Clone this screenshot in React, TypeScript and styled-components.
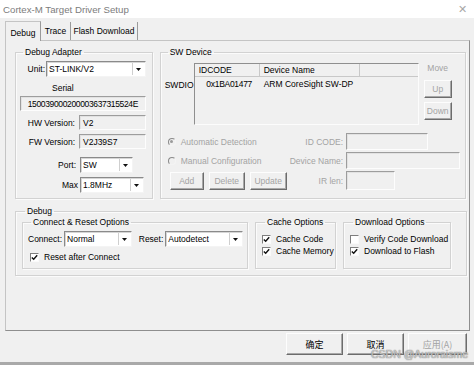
import styled, { createGlobalStyle } from "styled-components";

const GlobalStyle = createGlobalStyle`
  * { box-sizing: border-box; }
  html, body { margin: 0; padding: 0; background: #f0f0f0; }
  body {
    font-family: "Liberation Sans", Arial, sans-serif;
    font-size: 8.5px;
    color: #000;
  }
`;

const Window = styled.div`
  position: relative;
  width: 474px;
  height: 365px;
  overflow: hidden;
  display: flex;
  flex-direction: column;
  background: #f0f0f0;
  border-bottom: 3px solid #a9a9a9;
`;

const TitleBar = styled.div`
  height: 18px;
  flex: none;
  background: #fff;
  display: flex;
  align-items: center;
  justify-content: space-between;
  padding: 0 7px 0 3px;
`;

const Title = styled.span`
  font-size: 9.7px;
  color: #7c7c7c;
`;

const Close = styled.span`
  font-size: 11px;
  color: #a8a8a8;
`;

const Body = styled.div`
  flex: 1;
  padding: 2px 4px 0 5px;
  display: flex;
  flex-direction: column;
`;

const TabStrip = styled.div`
  height: 20px;
  display: flex;
  align-items: flex-end;
`;

const Tab = styled.div<{ $w: number; $active?: boolean }>`
  width: ${(p) => p.$w}px;
  height: ${(p) => (p.$active ? 20 : 18)}px;
  display: flex;
  align-items: center;
  justify-content: center;
  border-right: 1px solid #9a9a9a;
  border-left: ${(p) => (p.$active ? "1px solid #c4c4c4" : "none")};
  border-top: ${(p) => (p.$active ? "1px solid #c4c4c4" : "none")};
  padding-top: ${(p) => (p.$active ? 2 : 0)}px;
  margin-bottom: ${(p) => (p.$active ? -1 : 0)}px;
  background: #f0f0f0;
  position: relative;
  z-index: 1;
`;

const Panel = styled.div`
  height: 291px;
  border: 1px solid;
  border-color: #c4c4c4 #8e8e8e #8e8e8e #c4c4c4;
  padding: 6px 3px 0 9px;
  display: flex;
  flex-direction: column;
`;

const TopRow = styled.div`
  display: flex;
  gap: 7px;
`;

const Group = styled.fieldset<{ $w: number; $h: number; $pad: string; $mt?: number }>`
  margin: ${(p) => p.$mt ?? 0}px 0 0 0;
  min-inline-size: 0;
  width: ${(p) => p.$w}px;
  height: ${(p) => p.$h}px;
  padding: ${(p) => p.$pad};
  border: 1px solid #d2d2d2;
  box-shadow: inset 1px 1px #fbfbfb, 1px 1px #fbfbfb;
  overflow: hidden;
`;

const Legend = styled.legend`
  padding: 0 2px;
  margin-left: 3px;
  line-height: 11px;
  font-size: 8.5px;
`;

const FieldRow = styled.div<{ $cols: string; $gap: number; $mt: number; $h: number }>`
  display: grid;
  grid-template-columns: ${(p) => p.$cols};
  column-gap: ${(p) => p.$gap}px;
  align-items: center;
  height: ${(p) => p.$h}px;
  margin-top: ${(p) => p.$mt}px;
`;

const Label = styled.span<{ $disabled?: boolean }>`
  text-align: right;
  white-space: nowrap;
  color: ${(p) => (p.$disabled ? "#a3a3a3" : "#000")};
`;

const SerialLabel = styled.div`
  margin-top: 6px;
  height: 11px;
  line-height: 11px;
  padding-left: 32px;
`;

const Field = styled.div<{ $w?: number; $center?: boolean }>`
  height: 100%;
  width: ${(p) => (p.$w ? `${p.$w}px` : "100%")};
  background: #f0f0f0;
  border: 1px solid;
  border-color: #9d9d9d #fdfdfd #fdfdfd #9d9d9d;
  box-shadow: inset 1px 1px #e2e2e2;
  display: flex;
  align-items: center;
  justify-content: ${(p) => (p.$center ? "center" : "flex-start")};
  padding: 0 3px;
  white-space: nowrap;
`;

const SerialField = styled(Field)`
  height: 15px;
  margin-top: 2px;
  letter-spacing: -0.35px;
`;

const SelectBox = styled.div<{ $w: number }>`
  width: ${(p) => p.$w}px;
  height: 100%;
  background: #fff;
  border: 1px solid;
  border-color: #8a8a8a #f4f4f4 #f4f4f4 #8a8a8a;
  box-shadow: inset 1px 1px #d6d6d6;
  display: flex;
  align-items: stretch;
`;

const SelectText = styled.span`
  flex: 1;
  display: flex;
  align-items: center;
  padding-left: 2px;
  white-space: nowrap;
`;

const DropBtn = styled.span`
  width: 12px;
  margin: 1px;
  display: flex;
  align-items: center;
  justify-content: center;
  background: #fff;
  border-left: 1px solid #cfcfcf;
`;

function Select({ value, w }: { value: string; w: number }) {
  return (
    <SelectBox $w={w}>
      <SelectText>{value}</SelectText>
      <DropBtn>
        <svg width="5" height="3" viewBox="0 0 5 3">
          <path d="M0 0h5L2.5 3z" fill="#111" />
        </svg>
      </DropBtn>
    </SelectBox>
  );
}

const DeviceTop = styled.div`
  display: flex;
  height: 62px;
`;

const SwdioLabel = styled.span`
  width: 29px;
  padding-top: 17px;
`;

const Table = styled.div`
  width: 225px;
  height: 62px;
  border: 1px solid;
  border-color: #8f8f8f #fcfcfc #fcfcfc #8f8f8f;
  background: #f0f0f0;
  display: flex;
  flex-direction: column;
`;

const TableRow = styled.div<{ $head?: boolean }>`
  display: grid;
  grid-template-columns: 65px 100px 1fr;
  height: ${(p) => (p.$head ? 13 : 14)}px;
  border-bottom: ${(p) => (p.$head ? "1px solid #c8c8c8" : "none")};
`;

const Cell = styled.span<{ $head?: boolean; $center?: boolean }>`
  display: flex;
  align-items: center;
  justify-content: ${(p) => (p.$center ? "center" : "flex-start")};
  padding-left: 4px;
  border-right: ${(p) => (p.$head ? "1px solid #c8c8c8" : "none")};
  white-space: nowrap;
  overflow: hidden;
  letter-spacing: ${(p) => (p.$center ? "-0.3px" : "0")};
`;

const MoveCol = styled.div`
  width: 28px;
  margin-left: 5px;
  display: flex;
  flex-direction: column;
  align-items: center;
`;

const MoveLabel = styled.span`
  height: 10px;
  line-height: 10px;
  color: #a3a3a3;
`;

const Button = styled.div<{ $w: number; $h: number; $disabled?: boolean; $cjk?: boolean }>`
  width: ${(p) => p.$w}px;
  height: ${(p) => p.$h}px;
  flex: none;
  display: flex;
  align-items: center;
  justify-content: center;
  background: #f0f0f0;
  border: 1px solid;
  border-color: #fdfdfd #6c6c6c #6c6c6c #fdfdfd;
  box-shadow: inset -1px -1px #a8a8a8;
  color: ${(p) => (p.$disabled ? "#a3a3a3" : "#000")};
  font-family: ${(p) =>
    p.$cjk
      ? '"Noto Sans CJK SC", "Liberation Sans", sans-serif'
      : '"Liberation Sans", Arial, sans-serif'};
  font-size: ${(p) => (p.$cjk ? 9 : 8.5)}px;
`;

const MoveBtn = styled(Button)<{ $mt: number }>`
  margin-top: ${(p) => p.$mt}px;
`;

const ConfigGrid = styled.div`
  display: grid;
  grid-template-columns: 1fr auto 114px;
  grid-template-rows: 17px 17px 19px;
  column-gap: 3px;
  row-gap: 2px;
  margin-top: 8px;
  margin-right: 2px;
  align-items: center;
`;

const RadioRow = styled.div`
  display: flex;
  align-items: center;
  gap: 5px;
  padding-left: 3px;
  color: #a3a3a3;
`;

const RadioDot = styled.span<{ $on?: boolean }>`
  width: 8px;
  height: 8px;
  border-radius: 50%;
  border: 1px solid;
  border-color: #8a8a8a #f4f4f4 #f4f4f4 #8a8a8a;
  background: #f0f0f0;
  display: flex;
  align-items: center;
  justify-content: center;
  &::after {
    content: "";
    width: 3px;
    height: 3px;
    border-radius: 50%;
    background: ${(p) => (p.$on ? "#9a9a9a" : "transparent")};
  }
`;

const ButtonRow = styled.div`
  display: flex;
  align-items: center;
  gap: 5px;
  padding-left: 5px;
  height: 100%;
`;

const DebugGroupRow = styled.div`
  display: flex;
  gap: 7px;
`;

const CheckRow = styled.div<{ $mt: number }>`
  display: flex;
  align-items: center;
  gap: 5px;
  height: 12px;
  margin-top: ${(p) => p.$mt}px;
  white-space: nowrap;
`;

const CheckBox = styled.span`
  width: 9px;
  height: 9px;
  flex: none;
  border: 1px solid;
  border-color: #7e7e7e #fafafa #fafafa #7e7e7e;
  background: #fff;
  display: flex;
  align-items: center;
  justify-content: center;
`;

function Check({ on, label, mt }: { on: boolean; label: string; mt: number }) {
  return (
    <CheckRow $mt={mt}>
      <CheckBox>
        {on && (
          <svg width="7" height="7" viewBox="0 0 7 7">
            <path d="M0.8 3.4 L2.7 5.3 L6.2 1.2" stroke="#111" strokeWidth="1.4" fill="none" />
          </svg>
        )}
      </CheckBox>
      <span>{label}</span>
    </CheckRow>
  );
}

const ConnectRow = styled.div`
  display: flex;
  align-items: center;
  height: 16px;
  margin-top: 3px;
`;

const InlineLabel = styled.span<{ $ml?: number }>`
  margin: 0 2px 0 ${(p) => p.$ml ?? 0}px;
`;

const ResetCheck = styled.div`
  padding-left: 2px;
`;

const Footer = styled.div`
  display: flex;
  justify-content: flex-end;
  gap: 4px;
  margin-top: 2px;
  padding-right: 3px;
`;

const Watermark = styled.span`
  position: absolute;
  right: 6px;
  bottom: 2px;
  font-family: "Liberation Sans", Arial, sans-serif;
  font-size: 10.5px;
  color: rgba(255, 255, 255, 0.55);
  text-shadow: 0 0 1px #7d7d7d, 0 0 1px #7d7d7d;
`;

export default function App() {
  return (
    <Window>
      <GlobalStyle />
      <TitleBar>
        <Title>Cortex-M Target Driver Setup</Title>
        <Close>✕</Close>
      </TitleBar>
      <Body>
        <TabStrip>
          <Tab $w={36} $active>Debug</Tab>
          <Tab $w={30}>Trace</Tab>
          <Tab $w={67}>Flash Download</Tab>
        </TabStrip>
        <Panel>
          <TopRow>
            <Group $w={138} $h={152} $pad="3px 6px 0 4px">
              <Legend>Debug Adapter</Legend>
              <FieldRow $cols="25px 100px" $gap={1} $mt={0} $h={16}>
                <Label>Unit:</Label>
                <Select value="ST-LINK/V2" w={100} />
              </FieldRow>
              <SerialLabel>Serial</SerialLabel>
              <SerialField $center>150039000200003637315524E</SerialField>
              <FieldRow $cols="55px 67px" $gap={4} $mt={4} $h={15}>
                <Label>HW Version:</Label>
                <Field>V2</Field>
              </FieldRow>
              <FieldRow $cols="55px 67px" $gap={4} $mt={4} $h={15}>
                <Label>FW Version:</Label>
                <Field>V2J39S7</Field>
              </FieldRow>
              <FieldRow $cols="56px 53px" $gap={4} $mt={8} $h={16}>
                <Label>Port:</Label>
                <Select value="SW" w={53} />
              </FieldRow>
              <FieldRow $cols="58px 64px" $gap={2} $mt={4} $h={16}>
                <Label>Max</Label>
                <Select value="1.8MHz" w={64} />
              </FieldRow>
            </Group>
            <Group $w={307} $h={152} $pad="5px 13px 0 4px">
              <Legend>SW Device</Legend>
              <DeviceTop>
                <SwdioLabel>SWDIO</SwdioLabel>
                <Table>
                  <TableRow $head>
                    <Cell $head>IDCODE</Cell>
                    <Cell $head>Device Name</Cell>
                    <Cell />
                  </TableRow>
                  <TableRow>
                    <Cell $center>0x1BA01477</Cell>
                    <Cell>ARM CoreSight SW-DP</Cell>
                    <Cell />
                  </TableRow>
                </Table>
                <MoveCol>
                  <MoveLabel>Move</MoveLabel>
                  <MoveBtn $w={28} $h={18} $mt={7} $disabled>Up</MoveBtn>
                  <MoveBtn $w={28} $h={18} $mt={4} $disabled>Down</MoveBtn>
                </MoveCol>
              </DeviceTop>
              <ConfigGrid>
                <RadioRow>
                  <RadioDot $on />
                  Automatic Detection
                </RadioRow>
                <Label $disabled>ID CODE:</Label>
                <Field $w={82} />
                <RadioRow>
                  <RadioDot />
                  Manual Configuration
                </RadioRow>
                <Label $disabled>Device Name:</Label>
                <Field $w={114} />
                <ButtonRow>
                  <Button $w={34} $h={18} $disabled>Add</Button>
                  <Button $w={36} $h={18} $disabled>Delete</Button>
                  <Button $w={37} $h={18} $disabled>Update</Button>
                </ButtonRow>
                <Label $disabled>IR len:</Label>
                <Field $w={49} />
              </ConfigGrid>
            </Group>
          </TopRow>
          <Group $w={452} $h={70} $pad="0 6px 0 6px" $mt={7}>
            <Legend>Debug</Legend>
            <DebugGroupRow>
              <Group $w={226} $h={52} $pad="0 4px 0 5px">
                <Legend>Connect &amp; Reset Options</Legend>
                <ConnectRow>
                  <InlineLabel>Connect:</InlineLabel>
                  <Select value="Normal" w={68} />
                  <InlineLabel $ml={7}>Reset:</InlineLabel>
                  <Select value="Autodetect" w={78} />
                </ConnectRow>
                <ResetCheck>
                  <Check on label="Reset after Connect" mt={4} />
                </ResetCheck>
              </Group>
              <Group $w={81} $h={52} $pad="0 2px 0 6px">
                <Legend>Cache Options</Legend>
                <Check on label="Cache Code" mt={5} />
                <Check on label="Cache Memory" mt={0} />
              </Group>
              <Group $w={108} $h={52} $pad="0 1px 0 6px">
                <Legend>Download Options</Legend>
                <Check on={false} label="Verify Code Download" mt={5} />
                <Check on label="Download to Flash" mt={0} />
              </Group>
            </DebugGroupRow>
          </Group>
        </Panel>
        <Footer>
          <Button $w={57} $h={22} $cjk>确定</Button>
          <Button $w={57} $h={22} $cjk>取消</Button>
          <Button $w={59} $h={22} $cjk $disabled>应用(A)</Button>
        </Footer>
      </Body>
      <Watermark>CSDN @Auroraisme</Watermark>
    </Window>
  );
}
